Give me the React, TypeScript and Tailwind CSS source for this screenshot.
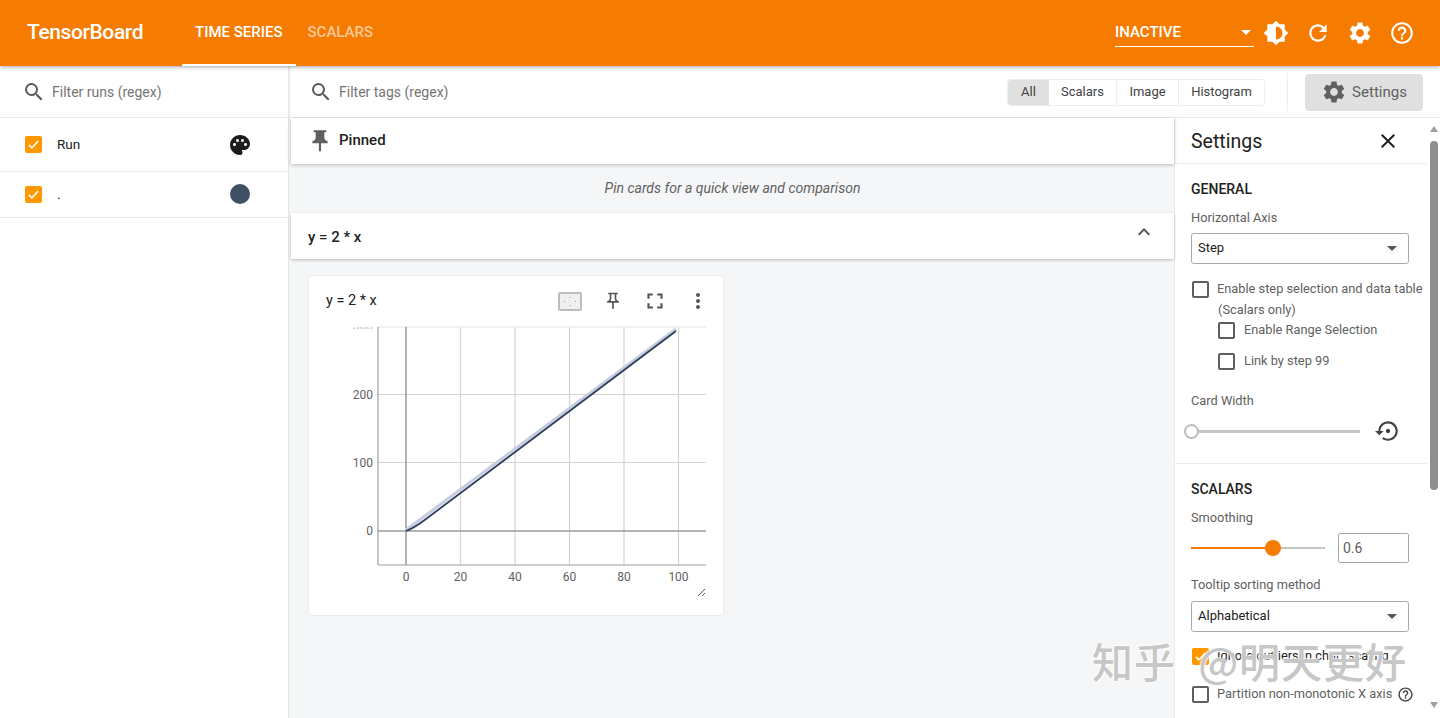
import {
  MdBrightness6,
  MdClose,
  MdExpandLess,
  MdFullscreen,
  MdHelpOutline,
  MdMoreVert,
  MdOutlinePushPin,
  MdPalette,
  MdPushPin,
  MdRefresh,
  MdSearch,
  MdSettings,
  MdSettingsBackupRestore,
} from 'react-icons/md';

function Check({ on, className = '' }: { on?: boolean; className?: string }) {
  if (on) {
    return (
      <span className={`flex h-[17px] w-[17px] shrink-0 items-center justify-center rounded-[2px] bg-[#ff9800] ${className}`}>
        <svg viewBox="0 0 24 24" className="h-[15px] w-[15px]" fill="none" stroke="#fff" strokeWidth="2.6">
          <path d="M4.5 12.5l5 5 10-11" />
        </svg>
      </span>
    );
  }
  return <span className={`block h-[17px] w-[17px] shrink-0 rounded-[2px] border-2 border-[#5f5f5f] ${className}`} />;
}

function Select({ value }: { value: string }) {
  return (
    <div className="flex h-[31px] w-[218px] items-center justify-between rounded-[3px] border border-[#a8a8a8] pb-[1px] pl-[6px] pr-[11px] text-[13px] text-[#212121]">
      {value}
      <span className="h-0 w-0 border-x-[5px] border-t-[5px] border-x-transparent border-t-[#555]" />
    </div>
  );
}

function Chart() {
  const xTicks = [
    [406, '0'],
    [460.5, '20'],
    [515, '40'],
    [569.5, '60'],
    [624, '80'],
    [678.5, '100'],
  ] as const;
  const yTicks = [
    [394.5, '200'],
    [462.5, '100'],
    [531, '0'],
  ] as const;
  return (
    <svg viewBox="309 320 414 285" className="block h-[285px] w-[414px]" fontFamily="Roboto, sans-serif" fontSize="12" fill="#616161">
      <clipPath id="plot-top">
        <rect x="340" y="327" width="36" height="2" />
      </clipPath>
      <text x={373} y={330} textAnchor="end" clipPath="url(#plot-top)" fill="#bdbdbd">300</text>
      {xTicks.slice(1).map(([x]) => (
        <line key={x} x1={x} x2={x} y1={327} y2={565} stroke="#d4d4d4" strokeWidth="1.2" />
      ))}
      <line x1={378} x2={706} y1={327} y2={327} stroke="#e2e2e2" />
      {yTicks.slice(0, 2).map(([y]) => (
        <line key={y} x1={378} x2={706} y1={y} y2={y} stroke="#d4d4d4" strokeWidth="1.2" />
      ))}
      <line x1={406} x2={406} y1={327} y2={565} stroke="#9a9a9a" strokeWidth="1.5" />
      <line x1={378} x2={706} y1={531} y2={531} stroke="#9a9a9a" strokeWidth="1.5" />
      <line x1={378} x2={378} y1={327} y2={565} stroke="#9e9e9e" strokeWidth="1.2" />
      <line x1={378} x2={706} y1={565} y2={565} stroke="#9e9e9e" strokeWidth="1.2" />
      <path d="M406 530 L676 329" stroke="#c5cde0" strokeWidth="3" fill="none" />
      <path d="M406 531 C412 529 418 525 426 519 L676 331" stroke="#2f3d58" strokeWidth="1.8" fill="none" />
      {yTicks.map(([y, t]) => (
        <text key={t} x={373} y={y + 4} textAnchor="end">{t}</text>
      ))}
      {xTicks.map(([x, t]) => (
        <text key={t} x={x} y={581} textAnchor="middle">{t}</text>
      ))}
      <path d="M698 596l7-7M702 596l3-3" stroke="#555" strokeWidth="1" />
    </svg>
  );
}

export default function App() {
  return (
    <div className="relative flex h-[718px] w-[1440px] flex-col overflow-hidden bg-white font-['Roboto',sans-serif] text-[#212121]">
      <header className="relative z-20 flex h-[66px] shrink-0 items-center bg-[#f57c00] pl-[27px] text-white shadow-[0_1px_4px_rgba(0,0,0,0.35)]">
        <div className="w-[155px] text-[21px] font-medium tracking-[-0.4px]">TensorBoard</div>
        <div className="flex h-full items-center justify-center border-b-2 border-white px-[13px] text-[15px] font-medium">TIME SERIES</div>
        <div className="flex h-full items-center px-[12px] pb-[2px] text-[15px] font-medium text-white/60">SCALARS</div>
        <div className="ml-auto flex items-center pr-[25px]">
          <div className="mr-[9px] flex h-[27px] w-[139px] items-center justify-between border-b border-white pb-[1px] pr-[3px] text-[15px] font-medium">
            INACTIVE
            <span className="h-0 w-0 border-x-[5px] border-t-[5px] border-x-transparent border-t-white" />
          </div>
          <div className="flex items-center gap-[16px]">
            <MdBrightness6 size={26} />
            <MdRefresh size={26} />
            <MdSettings size={26} />
            <MdHelpOutline size={26} />
          </div>
        </div>
      </header>

      <div className="flex min-h-0 flex-1">
        <aside className="w-[289px] shrink-0 border-r border-[#e4e4e4] bg-white">
          <div className="flex h-[52px] items-center border-b border-[#ebebeb] pl-[22px] pt-[1px] text-[#757575]">
            <MdSearch size={24} className="text-[#5a5a5a]" />
            <span className="ml-[6px] text-[14px]">Filter runs (regex)</span>
          </div>
          <div className="flex h-[54px] items-center border-b border-[#ebebeb] pl-[25px] pr-[36px] text-[13.5px]">
            <Check on />
            <span className="ml-[15px]">Run</span>
            <MdPalette size={24} className="ml-auto text-[#1c1c1c]" />
          </div>
          <div className="flex h-[46px] items-center border-b border-[#ebebeb] pl-[25px] pr-[38px] text-[14px]">
            <Check on />
            <span className="ml-[15px]">.</span>
            <span className="-mt-px ml-auto h-5 w-5 rounded-full bg-[#425066]" />
          </div>
        </aside>

        <main className="flex min-w-0 flex-1 flex-col bg-[#f5f6f7] pl-[2px]">
          <div className="flex h-[52px] shrink-0 items-center border-b border-[#ebebeb] bg-white pl-[18px] pt-[1px]">
            <MdSearch size={24} className="text-[#5a5a5a]" />
            <span className="ml-[6px] text-[14px] text-[#757575]">Filter tags (regex)</span>
            <div className="ml-auto flex h-[27px] rounded-[3px] border border-[#ededed] text-[13px] text-[#424242]">
              <span className="flex w-[41px] items-center justify-center rounded-l-[3px] bg-[#e0e0e0]">All</span>
              <span className="flex w-[68px] items-center justify-center border-r border-[#ededed]">Scalars</span>
              <span className="flex w-[62px] items-center justify-center border-r border-[#ededed]">Image</span>
              <span className="flex w-[85px] items-center justify-center">Histogram</span>
            </div>
            <div className="ml-[22px] mr-[17px] h-[38px] w-px bg-[#ececec]" />
            <div className="mr-[17px] flex h-[37px] w-[118px] items-center justify-center gap-[5px] rounded-[4px] bg-[#e0e0e0] text-[15px] text-[#616161]">
              <MdSettings size={26} />
              Settings
            </div>
          </div>

          <div className="flex min-h-0 flex-1">
            <div className="min-w-0 flex-1">
              <div className="relative flex h-[46px] items-center bg-white pl-[16px] text-[15px] font-medium shadow-[0_1px_4px_rgba(0,0,0,0.25)]">
                <MdPushPin size={26} className="text-[#5f5f5f]" />
                <span className="mb-[2px] ml-[6px]">Pinned</span>
              </div>
              <div className="flex h-[49px] items-center justify-center text-[14px] italic text-[#616161]">
                Pin cards for a quick view and comparison
              </div>
              <div className="relative flex h-[46px] items-center justify-between bg-white pl-[17px] pr-[18px] text-[15px] font-medium shadow-[0_1px_3px_rgba(0,0,0,0.25)]">
                <span className="mt-[2px]">y = 2 * x</span>
                <MdExpandLess size={24} className="-mt-[8px] text-[#555]" />
              </div>
              <div className="ml-[17px] mt-[16px] h-[341px] w-[416px] rounded-[4px] border border-[#ebebeb] bg-white">
                <div className="flex h-[44px] items-center pl-[17px] pr-[13px] pt-[6px]">
                  <span className="flex-1 whitespace-nowrap text-[14.5px]">y = 2 * x</span>
                  <svg viewBox="0 0 24 19" className="h-[19px] w-[24px]" fill="none">
                    <rect x="1" y="1" width="22" height="17" rx="1" fill="#f0f0f0" stroke="#bdbdbd" strokeWidth="2" />
                    <path d="M12 5v1M12 13v1M6 9.5h1M17 9.5h1" stroke="#9a9a9a" strokeWidth="1" />
                  </svg>
                  <MdOutlinePushPin size={20} className="ml-[21px] text-[#555]" />
                  <MdFullscreen size={26} className="ml-[19px] text-[#555]" />
                  <MdMoreVert size={24} className="ml-[18px] text-[#555]" />
                </div>
                <Chart />
              </div>
            </div>

            <section className="w-[266px] shrink-0 border-l border-[#ececec] bg-white">
              <div className="flex">
                <div className="w-[252px] shrink-0">
                  <div className="flex h-[46px] items-center justify-between border-b border-[#ececec] pl-[16px] pr-[27px] text-[19.5px]">
                    <span className="mt-[2px]">Settings</span>
                    <MdClose size={24} className="text-[#212121]" />
                  </div>
                  <div className="border-b border-[#ececec] pb-[19px] pl-[16px] text-[12.8px] text-[#616161]">
                    <h3 className="mt-[16px] text-[14px] font-medium leading-[18px] text-[#212121]">GENERAL</h3>
                    <div className="mt-[11px] leading-[18px]">Horizontal Axis</div>
                    <div className="mt-[6px]"><Select value="Step" /></div>
                    <div className="mt-[16px] flex items-center leading-[18px]">
                      <Check className="ml-px" />
                      <span className="ml-[8px] whitespace-nowrap">Enable step selection and data table</span>
                    </div>
                    <div className="ml-[27px] mt-[3px] leading-[18px]">(Scalars only)</div>
                    <div className="ml-[27px] mt-[2px] flex items-center leading-[18px]">
                      <Check />
                      <span className="ml-[9px]">Enable Range Selection</span>
                    </div>
                    <div className="ml-[27px] mt-[13px] flex items-center leading-[18px]">
                      <Check />
                      <span className="ml-[9px]">Link by step 99</span>
                    </div>
                    <div className="mt-[22px] leading-[18px]">Card Width</div>
                    <div className="mt-[8px] flex items-center">
                      <div className="relative h-[3px] w-[169px] bg-[#c4c4c4]">
                        <span className="absolute left-[-7px] top-[-6px] h-[15px] w-[15px] rounded-full border-2 border-[#bdbdbd] bg-white" />
                      </div>
                      <MdSettingsBackupRestore size={26} className="ml-[15px] text-[#424242]" />
                    </div>
                  </div>
                  <div className="pl-[16px] text-[12.8px] text-[#616161]">
                    <h3 className="mt-[16px] text-[14px] font-medium leading-[18px] text-[#212121]">SCALARS</h3>
                    <div className="mt-[11px] leading-[18px]">Smoothing</div>
                    <div className="mt-[6px] flex items-center">
                      <div className="relative h-[2px] w-[134px] bg-[#c4c4c4]">
                        <div className="h-full w-[81px] bg-[#f57c00]" />
                        <span className="absolute left-[74px] top-[-7px] h-4 w-4 rounded-full bg-[#f57c00]" />
                      </div>
                      <div className="ml-[13px] flex h-[30px] w-[71px] items-center rounded-[2px] border border-[#a8a8a8] pl-[4px] text-[14px]">0.6</div>
                    </div>
                    <div className="mt-[13px] leading-[18px]">Tooltip sorting method</div>
                    <div className="mt-[7px]"><Select value="Alphabetical" /></div>
                    <div className="mt-[15px] flex items-center leading-[18px]">
                      <Check on className="ml-px" />
                      <span className="ml-[8px] whitespace-nowrap text-[#212121]">Ignore outliers in chart scaling</span>
                    </div>
                    <div className="mt-[20px] flex items-center leading-[18px]">
                      <Check className="ml-px" />
                      <span className="ml-[8px] whitespace-nowrap">Partition non-monotonic X axis</span>
                      <MdHelpOutline size={17} className="ml-[5px] text-[#424242]" />
                    </div>
                  </div>
                </div>
                <div className="relative h-[600px] w-[14px] shrink-0">
                  <span className="absolute left-[3px] top-[8px] h-0 w-0 border-x-[4px] border-b-[6px] border-x-transparent border-b-[#9e9e9e]" />
                  <div className="absolute left-[3px] top-[23px] h-[349px] w-[8px] rounded-[4px] bg-[#8e8e8e]" />
                  <span className="absolute left-[3px] top-[584px] h-0 w-0 border-x-[4px] border-t-[6px] border-x-transparent border-t-[#9e9e9e]" />
                </div>
              </div>
            </section>
          </div>
        </main>
      </div>

      {/* watermark stamped over the screenshot */}
      <div className="absolute left-[1092px] top-[630px] z-30 whitespace-nowrap font-['Noto_Sans_CJK_SC',sans-serif] text-[41px] font-medium leading-[60px] tracking-[1px] text-[#c0c0c0]/90 [word-spacing:12px] [text-shadow:1px_1px_1px_rgba(255,255,255,0.9),-1px_-1px_1px_rgba(255,255,255,0.7)]">
        知乎 @明天更好
      </div>
    </div>
  );
}
